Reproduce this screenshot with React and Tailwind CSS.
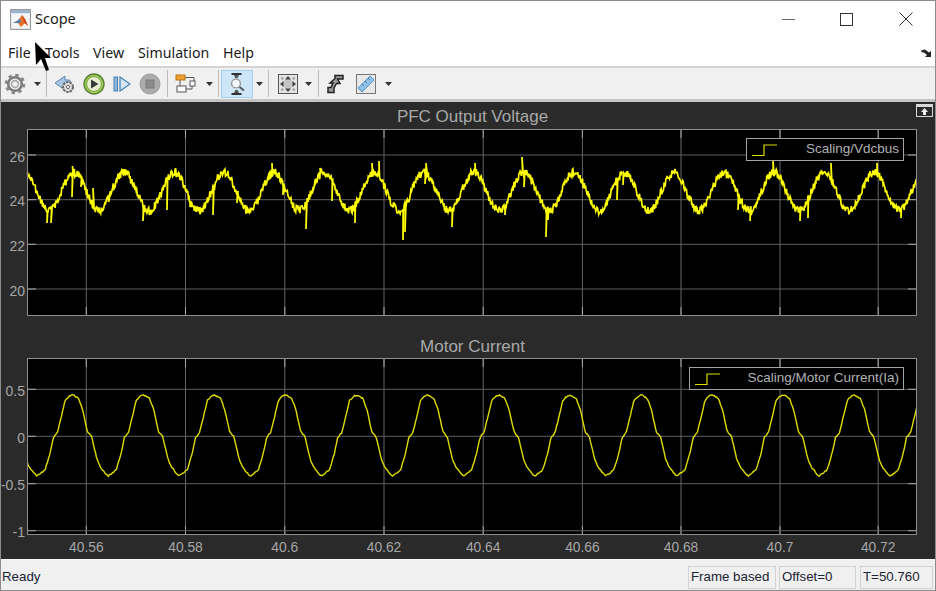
import React from 'react';

const GRID_X = [86.3, 185.5, 284.8, 384, 483.2, 582.4, 681, 780, 878.2];
const X_LABELS = ['40.56', '40.58', '40.6', '40.62', '40.64', '40.66', '40.68', '40.7', '40.72'];

function makeRandom(seed) {
  let s = seed;
  return () => {
    s = (s * 1664525 + 1013904223) % 4294967296;
    return s / 4294967296;
  };
}

// spikes read off the scope trace
const SPIKES = [
  [47, 223], [51, 223], [72, 197], [72.5, 166], [81, 187], [93, 188], [143, 221], [167, 210], [190, 207], [213, 215],
  [237, 203], [272, 163], [283, 195], [306, 229], [320, 168], [332, 201], [355, 223], [372, 163], [379, 161],
  [403, 240], [405, 232], [425, 184], [426, 163], [452, 227], [475, 163], [505, 215], [522, 157], [524, 187],
  [546, 237], [548, 220], [617, 200], [623, 185], [738, 210], [750, 221], [773, 160], [800, 221], [808, 218],
  [831, 163], [877, 163], [901, 218],
];

function voltagePoints() {
  const rand = makeRandom(17);
  const pts = [];
  let next = 0;
  for (let x = 27.5; x <= 916.5; x += 0.6) {
    const theta = (2 * Math.PI * (x - 74)) / 50;
    const y = 191.5 - 19 * Math.cos(theta) + (rand() - 0.5) * 8;
    pts.push(`${x.toFixed(1)},${y.toFixed(1)}`);
    while (next < SPIKES.length && SPIKES[next][0] <= x) {
      pts.push(`${SPIKES[next][0]},${SPIKES[next][1]}`);
      pts.push(`${(x + 0.4).toFixed(1)},${y.toFixed(1)}`);
      next++;
    }
  }
  return pts.join(' ');
}

const CURRENT_SHAPE = [
  [-107, 438], [-83, 420], [-68, 370], [-58, 322], [-46, 308], [-33, 255], [-23, 212], [-10, 198], [0, 195],
  [17, 205], [30, 240], [44, 305], [57, 320], [72, 385], [82, 410], [102, 435], [107, 438],
];

function currentPoints() {
  const rand = makeRandom(5);
  const pts = [];
  for (let x = 27.5; x <= 917; x += 1) {
    let d = ((x - 72.7) * 3) % 213.3;
    if (d > 106.6) d -= 213.3;
    if (d < -106.6) d += 213.3;
    let zy = 438;
    for (let i = 0; i < CURRENT_SHAPE.length - 1; i++) {
      const [a, ya] = CURRENT_SHAPE[i];
      const [b, yb] = CURRENT_SHAPE[i + 1];
      if (d >= a && d <= b) zy = ya + ((yb - ya) * (d - a)) / (b - a);
    }
    pts.push(`${x},${(330 + zy / 3 + (rand() - 0.5) * 1.2).toFixed(1)}`);
  }
  return pts.join(' ');
}

function Axes({ top, bottom, yTicks, xLabels, children, extra = 0 }) {
  const h = bottom - top;
  return (
    <svg
      className="block w-[934px] shrink-0"
      height={h + 2 + extra}
      viewBox={`1 ${top - 1} 934 ${h + 2 + extra}`}
      fontFamily="'Liberation Sans', Arial, sans-serif"
    >
      <rect x="27" y={top} width="890" height={h} fill="#000" />
      {GRID_X.map((x) => (
        <g key={x}>
          <line x1={x} x2={x} y1={top} y2={bottom} stroke="#666" />
          <line x1={x} x2={x} y1={top} y2={top + 9} stroke="#a8a8a8" />
          <line x1={x} x2={x} y1={bottom - 9} y2={bottom} stroke="#a8a8a8" />
        </g>
      ))}
      {yTicks.map(([y, label]) => (
        <g key={label}>
          <line x1="27" x2="917" y1={y} y2={y} stroke="#5f5f5f" />
          <line x1="27" x2="36" y1={y} y2={y} stroke="#a8a8a8" />
          <line x1="908" x2="917" y1={y} y2={y} stroke="#a8a8a8" />
          <text x="25" y={y + 6.5} textAnchor="end" fontSize="14" fill="#a6a6a6">{label}</text>
        </g>
      ))}
      {children}
      <rect x="27.5" y={top + 0.5} width="889" height={h - 1} fill="none" stroke="#8e8e8e" />
      {xLabels && GRID_X.map((x, i) => (
        <text key={x} x={x} y={bottom + 17} textAnchor="middle" fontSize="13.8" fill="#a6a6a6">{X_LABELS[i]}</text>
      ))}
    </svg>
  );
}

function Legend({ label, className }) {
  return (
    <div className={`absolute flex items-center justify-between border border-[#a4a4a4] bg-black pl-[5px] pr-[4px] text-[13.5px] text-[#b2b2b2] ${className}`}>
      <svg width="26" height="12" viewBox="0 0 26 12" className="shrink-0">
        <path d="M0 11.5H12V1H25" fill="none" stroke="#dede00" strokeWidth="1.2" />
      </svg>
      <span>{label}</span>
    </div>
  );
}

function Caret({ className }) {
  return (
    <div className={`flex shrink-0 items-center justify-center ${className}`}>
      <svg width="7" height="4" viewBox="0 0 7 4"><path d="M0 0H7L3.5 4Z" fill="#333" /></svg>
    </div>
  );
}

function Sep({ className = '' }) {
  return <div className={`h-[27px] w-px shrink-0 bg-[#bdbdbd] ${className}`} />;
}

function MatlabIcon() {
  return (
    <svg width="21" height="21" viewBox="0 0 21 21" className="shrink-0">
      <rect x="0.5" y="0.5" width="20" height="20" fill="#e4e8ee" stroke="#9a9a9a" />
      <rect x="1" y="1" width="19" height="3" fill="#9db4cf" />
      <rect x="2" y="5" width="17" height="14" fill="#f6f6f6" />
      <path d="M3 14L8 11.5L12 6L15 10L18 17L14.5 14.5L11 18L8 14Z" fill="#e5702a" />
      <path d="M3 14L8 11.5L9.5 9.5L11 13L8 14Z" fill="#3f7fb8" />
      <path d="M12 6L15 10L18 17L14 13Z" fill="#c9471d" />
    </svg>
  );
}

function GearIcon() {
  return (
    <svg width="22" height="22" viewBox="0 0 22 22">
      <circle cx="11" cy="11" r="9" fill="none" stroke="#888" strokeWidth="2.6" strokeDasharray="3.4 3.67" />
      <circle cx="11" cy="11" r="6.8" fill="none" stroke="#7c7c7c" strokeWidth="2.6" />
      <circle cx="11" cy="11" r="3.4" fill="none" stroke="#a8a8a8" strokeWidth="1.6" />
    </svg>
  );
}

function BackIcon() {
  return (
    <svg width="22" height="20" viewBox="0 0 22 20">
      <path d="M1 9L11 2V6H16V12H11V16Z" fill="#a9c6e4" stroke="#5d87b3" />
      <circle cx="14" cy="13" r="5" fill="#dcdcdc" stroke="#666" strokeWidth="2" strokeDasharray="2.5 1" />
      <circle cx="14" cy="13" r="1.6" fill="#fff" stroke="#666" />
    </svg>
  );
}

function PlayIcon() {
  return (
    <svg width="22" height="22" viewBox="0 0 22 22">
      <circle cx="11" cy="11" r="10" fill="#9ccc57" stroke="#5d7f35" strokeWidth="1.4" />
      <circle cx="11" cy="11" r="7.4" fill="#e6f0cf" stroke="#7ca644" />
      <path d="M8 6.5L15.5 11L8 15.5Z" fill="#3a3a3a" />
    </svg>
  );
}

function StepIcon() {
  return (
    <svg width="18" height="18" viewBox="0 0 18 18">
      <rect x="1" y="2" width="3.5" height="14" fill="#8db6dc" stroke="#4d82b4" />
      <path d="M7 2L17 9L7 16Z" fill="#d5e5f4" stroke="#4d82b4" strokeWidth="1.3" />
    </svg>
  );
}

function StopIcon() {
  return (
    <svg width="22" height="22" viewBox="0 0 22 22">
      <circle cx="11" cy="11" r="10" fill="#acacac" stroke="#9c9c9c" />
      <rect x="7" y="7" width="8" height="8" fill="#8a8a8a" stroke="#7a7a7a" />
    </svg>
  );
}

function BlocksIcon() {
  return (
    <svg width="22" height="20" viewBox="0 0 22 20">
      <path d="M5 6V15H8M10 3.5H19V9" fill="none" stroke="#555" />
      <rect x="1" y="1" width="9" height="5" fill="#f0a030" stroke="#b97514" />
      <rect x="15" y="7" width="5" height="5" fill="#fff" stroke="#555" />
      <rect x="2" y="12" width="9" height="6" fill="#fff" stroke="#555" />
      <path d="M11 15H17V12" fill="none" stroke="#555" />
    </svg>
  );
}

function ZoomIcon() {
  return (
    <svg width="18" height="24" viewBox="0 0 18 24">
      <rect x="3.5" y="1" width="10" height="2" fill="#333" />
      <path d="M6 3H11L9.7 6H7.3ZM6 21H11L9.7 18H7.3Z" fill="#555" />
      <rect x="3.5" y="21" width="10" height="2" fill="#333" />
      <circle cx="8" cy="11.5" r="4.4" fill="#f2f6f9" stroke="#999" strokeWidth="1.4" />
      <path d="M11.5 15L16 18.5" stroke="#555" strokeWidth="2" />
    </svg>
  );
}

function FitIcon() {
  return (
    <svg width="20" height="20" viewBox="0 0 20 20">
      <rect x="0.5" y="0.5" width="19" height="19" fill="#e4e4e4" stroke="#555" />
      <circle cx="10" cy="10" r="5" fill="#c4c4c4" />
      <path d="M10 2L13 5.5H7ZM10 18L13 14.5H7ZM2 10L5.5 7V13ZM18 10L14.5 7V13Z" fill="#444" />
      <path d="M3 3L6 4L4 6ZM17 3L14 4L16 6ZM3 17L6 16L4 14ZM17 17L14 16L16 14Z" fill="#888" />
    </svg>
  );
}

function StepLineIcon() {
  return (
    <svg width="17" height="20" viewBox="0 0 17 20">
      <path d="M1 18.5V13.5H4L6 9H3L8 4.5V1.5H16V5H10.5L13 9.5H9.5L7 14V18.5Z" fill="#9a9a9a" stroke="#222" strokeWidth="1.5" />
    </svg>
  );
}

function RulerIcon() {
  return (
    <svg width="20" height="20" viewBox="0 0 20 20">
      <rect x="0.5" y="0.5" width="19" height="19" fill="#e8e8e8" stroke="#777" />
      <path d="M2 14L14 2L18 6L6 18Z" fill="#8fc0e6" stroke="#5c93bf" />
      <path d="M6 10L8 12M9 7L11 9M12 4L14 6" stroke="#4f7fa6" />
    </svg>
  );
}

function ToolButton({ className, children }) {
  return <div className={`flex shrink-0 items-center justify-center ${className}`}>{children}</div>;
}

export default function App() {
  const menu = [
    ['File', 'w-[37px]'],
    ['Tools', 'w-[48px]'],
    ['View', 'w-[45px]'],
    ['Simulation', 'w-[85px]'],
    ['Help', 'w-[40px]'],
  ];

  return (
    <div className="relative flex h-[591px] w-[936px] flex-col overflow-hidden border border-[#8c8c8c] bg-white font-['Noto_Sans',sans-serif] text-[#1a1a1a]">
      {/* title bar */}
      <div className="flex h-[39px] shrink-0 items-center pb-[3px] pl-[9px]">
        <MatlabIcon />
        <span className="ml-[4px] text-[14.5px]">Scope</span>
        <div className="ml-auto flex items-center pr-[22px]">
          <div className="h-px w-[13px] bg-[#666]" />
          <div className="ml-[45px] h-[13px] w-[13px] border border-[#333]" />
          <svg width="14" height="14" viewBox="0 0 14 14" className="ml-[46px]">
            <path d="M0.5 0.5L13.5 13.5M13.5 0.5L0.5 13.5" stroke="#333" />
          </svg>
        </div>
      </div>

      {/* menu */}
      <div className="flex h-[26px] shrink-0 items-center pl-[7px] pr-[4px] text-[14.2px]">
        {menu.map(([name, w]) => (
          <span key={name} className={w}>{name}</span>
        ))}
        <svg width="10" height="8" viewBox="0 0 10 8" className="ml-auto">
          <path d="M0 1.5L4 0.5L8 3.5L10 2V8H4L6 6L3 3.5L1 3.5Z" fill="#222" />
        </svg>
      </div>

      {/* toolbar */}
      <div className="flex h-[36px] shrink-0 items-center border-t-2 border-b-[3px] border-t-[#d4d4d4] border-b-[#c4c4c4] bg-[#f0f0f0]">
        <ToolButton className="w-[28px]"><GearIcon /></ToolButton>
        <Caret className="w-[17px]" />
        <Sep />
        <ToolButton className="ml-[4px] w-[28px]"><BackIcon /></ToolButton>
        <ToolButton className="ml-[1px] w-[28px]"><PlayIcon /></ToolButton>
        <ToolButton className="w-[28px]"><StepIcon /></ToolButton>
        <ToolButton className="w-[28px]"><StopIcon /></ToolButton>
        <Sep className="ml-[3px]" />
        <ToolButton className="ml-[4px] w-[28px]"><BlocksIcon /></ToolButton>
        <Caret className="w-[18px]" />
        <Sep />
        <ToolButton className="ml-[2px] h-[28px] w-[32px] border border-[#9fd0f3] bg-[#cde6f8]"><ZoomIcon /></ToolButton>
        <Caret className="w-[13px]" />
        <Sep className="ml-[2px]" />
        <ToolButton className="ml-[9px] w-[20px]"><FitIcon /></ToolButton>
        <Caret className="w-[20px]" />
        <Sep />
        <ToolButton className="ml-[8px] w-[17px]"><StepLineIcon /></ToolButton>
        <ToolButton className="ml-[12px] w-[20px]"><RulerIcon /></ToolButton>
        <Caret className="w-[24px]" />
      </div>

      {/* scope panels */}
      <div className="relative flex min-h-0 flex-1 flex-col bg-[#2a2a2a] font-['Liberation_Sans',Arial,sans-serif]">
        <svg width="17" height="13" viewBox="0 0 17 13" className="absolute right-[2px] top-[2px]">
          <rect x="0.5" y="0.5" width="16" height="12" fill="#2a2a2a" stroke="#d8d8d8" />
          <rect x="1" y="1" width="15" height="2" fill="#d8d8d8" />
          <path d="M8.5 4L12 8H10V11H7V8H5Z" fill="#eee" />
        </svg>

        <div className="flex h-[26px] shrink-0 items-center justify-center pl-[9px] pt-[3px] text-[17px] text-[#a8a8a8]">PFC Output Voltage</div>
        <div className="relative shrink-0">
          <Axes top={129} bottom={316} yTicks={[[155, '26'], [199.7, '24'], [244.3, '22'], [289, '20']]}>
            <polyline points={voltagePoints()} fill="none" stroke="#ffff00" strokeWidth="1.7" />
          </Axes>
          <Legend label="Scaling/Vdcbus" className="left-[745px] top-[10px] h-[23px] w-[158px]" />
        </div>

        <div className="flex h-[40px] shrink-0 items-center justify-center pl-[9px] pt-[20px] text-[17px] text-[#a8a8a8]">Motor Current</div>
        <div className="relative shrink-0">
          <Axes top={358} bottom={535} extra={23} xLabels yTicks={[[389.3, '0.5'], [436.3, '0'], [483.7, '-0.5'], [530.7, '-1']]}>
            <polyline points={currentPoints()} fill="none" stroke="#e0dc00" strokeWidth="1.4" />
          </Axes>
          <Legend label="Scaling/Motor Current(Ia)" className="left-[688px] top-[10px] h-[23px] w-[215px]" />
        </div>
      </div>

      {/* status bar */}
      <div className="flex h-[31px] shrink-0 items-center border-t border-t-[#f8f8f8] bg-[#f0f0f0] pl-px pr-[2px] pt-[4px] font-['Liberation_Sans',Arial,sans-serif] text-[13.3px] whitespace-nowrap text-[#1b2433]">
        <span>Ready</span>
        <div className="ml-auto flex h-[23px] w-[88px] items-center border border-[#d2d2d2] pl-[2px]">Frame based</div>
        <div className="ml-[3px] flex h-[23px] w-[77px] items-center border border-[#d2d2d2] pl-[2px]">Offset=0</div>
        <div className="ml-[4px] flex h-[23px] w-[73px] items-center border border-[#d2d2d2] pl-[2px]">T=50.760</div>
      </div>

      {/* mouse pointer from the capture */}
      <svg width="18" height="30" viewBox="0 0 18 30" className="absolute left-[33px] top-[41px]">
        <path d="M1 0L2 23L7 17L12 29L15 28L11 16L17 16Z" fill="#000" />
      </svg>
    </div>
  );
}
